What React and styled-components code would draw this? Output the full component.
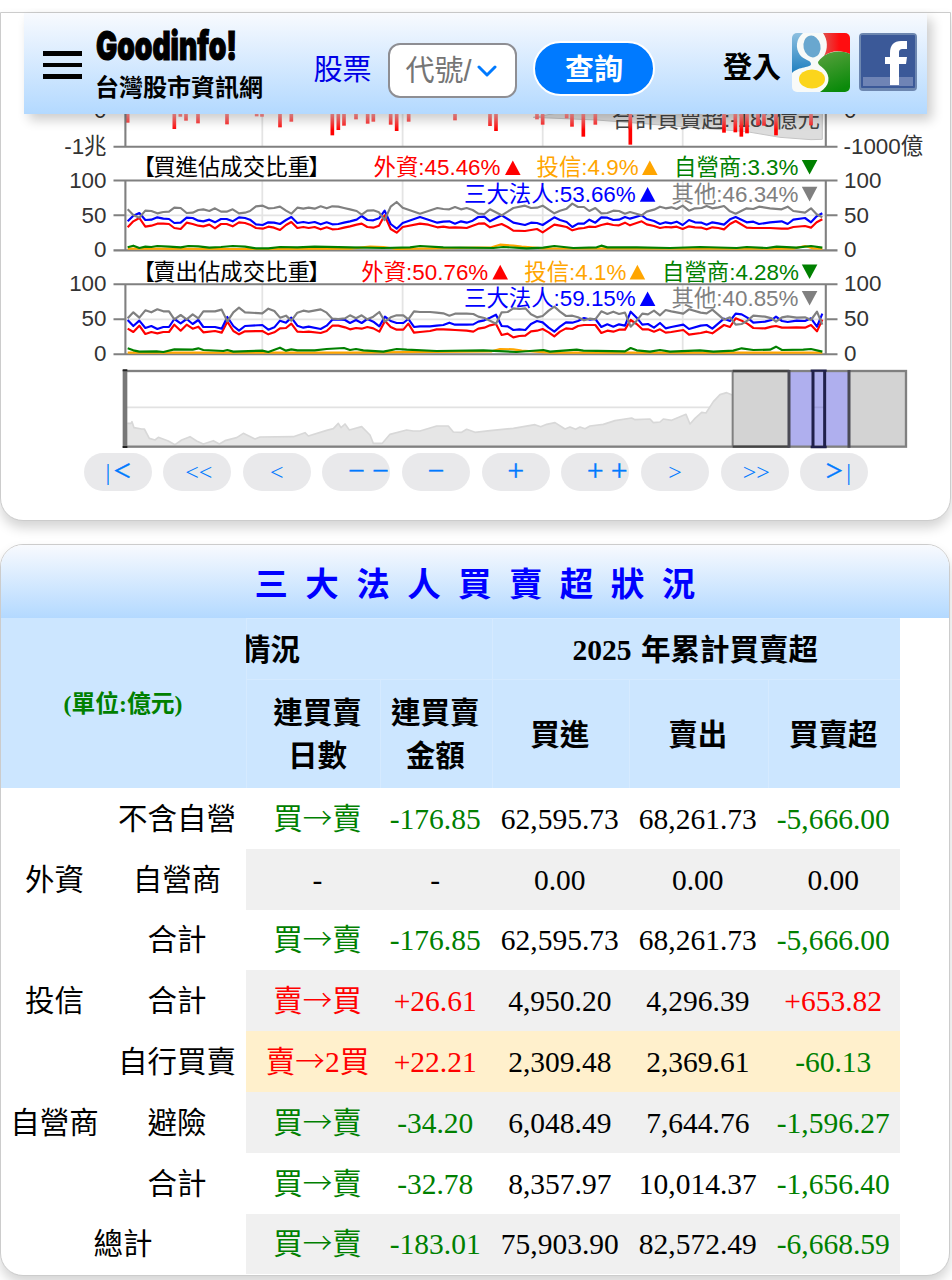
import React from "react";
import styled, { createGlobalStyle } from "styled-components";

const GlobalStyle = createGlobalStyle`
  * {
    box-sizing: border-box;
  }
  body {
    margin: 0;
    background: #fff;
    overflow: hidden;
    font-family: "Liberation Serif", "Noto Sans CJK TC", serif;
    font-size: 29.5px;
    color: #000;
  }
`;

const Page = styled.div`
  width: 952px;
  height: 1280px;
  padding-top: 12px;
  overflow: hidden;
`;

const Card = styled.section`
  position: relative;
  width: ${(p) => p.$width}px;
  height: ${(p) => p.$height}px;
  margin-bottom: 23px;
  border: 1px solid #ccc;
  border-radius: ${(p) => (p.$flatTop ? "0 0 23px 23px" : "23px")};
  background: #fff;
  box-shadow: 0 7px 12px rgba(0, 0, 0, 0.17);
`;

const Header = styled.header`
  position: absolute;
  top: 0;
  left: 23px;
  width: 903px;
  height: 101px;
  display: flex;
  align-items: center;
  padding: 0 10px 0 19px;
  background: linear-gradient(#f8fafe, #b3d9ff);
  box-shadow: 5px 6px 11px rgba(0, 0, 0, 0.2);
`;

const Burger = styled.div`
  display: flex;
  flex-direction: column;
  gap: 7px;
  width: 39px;
  margin-top: 3px;
  & > span {
    height: 4.4px;
    background: #000;
  }
`;

const Brand = styled.div`
  width: 170px;
  margin-left: 13px;
  font: 700 24px/29px "Noto Sans CJK TC", sans-serif;
  white-space: nowrap;
  & > svg {
    display: block;
    margin-bottom: 5px;
    overflow: visible;
  }
`;

const StockLink = styled.a`
  margin: 12px 0 0 48.5px;
  font-size: 29px;
  line-height: 44px;
  color: #0000e6;
`;

const Search = styled.div`
  display: flex;
  align-items: center;
  justify-content: space-between;
  width: 129px;
  height: 55px;
  margin: 14px 0 0 16.5px;
  padding: 0 18px 0 15.5px;
  border: 2px solid #8e8e93;
  border-radius: 12px;
  background: #fff;
  color: #757575;
  font: 29px/40px "Liberation Sans", "Noto Sans CJK TC", sans-serif;
  white-space: nowrap;
`;

const SearchButton = styled.button`
  width: 122px;
  height: 55px;
  margin: 9px 0 0 16px;
  padding: 0 0 3px;
  border: 2px solid #fff;
  border-radius: 28px;
  background: #007aff;
  color: #fff;
  font: 700 29px/44px "Noto Sans CJK TC", sans-serif;
`;

const Login = styled.div`
  display: flex;
  align-items: center;
  gap: 9px;
  margin-left: auto;
  font: 700 29px/44px "Noto Sans CJK TC", sans-serif;
  & > b {
    margin: 2px 2px 0 0;
    font-weight: 700;
  }
  & > svg {
    margin-top: -3px;
  }
`;

const ChartSvg = styled.svg`
  display: block;
  text {
    font-family: "Liberation Sans", "Noto Sans CJK TC", sans-serif;
    font-size: 22.4px;
  }
`;

const Buttons = styled.div`
  display: flex;
  gap: 11.65px;
  margin: 4px 0 0 82.5px;
`;

const PillButton = styled.button`
  display: flex;
  align-items: center;
  justify-content: safe center;
  width: 68px;
  height: 38px;
  padding: 0 22px;
  border: 0;
  border-radius: 19px;
  overflow: hidden;
  background: #e9e9eb;
  color: #007aff;
  font: 24px/36px "Liberation Serif", "Noto Sans CJK TC", serif;
  white-space: nowrap;
`;

const Wide = styled.span`
  padding-left: 2.5px;
  font-size: 19px;
  font-weight: 500;
  letter-spacing: 5px;
  margin-right: -2.5px;
  -webkit-text-stroke: 0.4px #007aff;
`;

const Title = styled.h2`
  height: 73px;
  margin: 0;
  border-radius: 22px 22px 0 0;
  background: linear-gradient(#f8fafe, #b3d9ff);
  color: #0000ff;
  font: 700 33.5px/74px "Noto Sans CJK TC", sans-serif;
  letter-spacing: 17.4px;
  text-align: center;
  text-indent: 17px;
`;

const Grid = styled.div`
  display: grid;
  width: 899px;
  grid-template-columns: 108px 137px 134px 111.5px 137.5px 138.5px 132.5px;
  grid-template-rows: 61px 109px repeat(8, 60.8px);
  border-bottom-left-radius: 22px;
  overflow: hidden;
`;

const Cell = styled.div`
  display: flex;
  align-items: center;
  justify-content: center;
  grid-column: ${(p) => p.$col};
  grid-row: ${(p) => p.$row};
  padding: 2px 1px 0 ${(p) => (p.$col === 3 ? 10 : 0)}px;
  background: ${(p) => p.$bg || "transparent"};
  color: ${(p) => p.$color || "#000"};
  line-height: 43px;
  text-align: center;
  white-space: nowrap;
`;

const HeadCell = styled(Cell)`
  padding-top: 3px;
  background: #cce6ff;
  font-weight: 700;
  word-spacing: 2px;
  box-shadow: ${(p) => (p.$plain ? "none" : "inset 1px 1px 0 #d5eaff")};
`;

const ClippedHead = styled(HeadCell)`
  justify-content: flex-start;
  overflow: hidden;
  text-indent: -5px;
`;

const UnitCell = styled(HeadCell)`
  padding-top: 2px;
  color: #008000;
  font-size: 23.8px;
`;

const Arrow = styled.span`
  font-family: "Noto Sans CJK TC", sans-serif;
  font-weight: 300;
  line-height: 1;
`;

// [x, other %, gap down to the foreign line], three units to a pixel
const buyData = [
  [233, 328, 18], [250, 345, 17], [268, 353, 15], [286, 332, 20], [304, 333, 18], [322, 340, 19], [340, 336], [357, 335],
  [373, 323], [392, 324, 19], [410, 339], [428, 338, 18], [445, 330], [460, 328], [478, 333], [495, 325, 18], [513, 335],
  [530, 335], [548, 328], [567, 340], [585, 338], [600, 333], [618, 319, 11], [638, 317, 11], [655, 325, 13], [672, 324],
  [690, 320, 18], [708, 332], [724, 341], [742, 323], [760, 326], [776, 323], [794, 326], [812, 319], [830, 325],
  [847, 319], [865, 320], [882, 324], [900, 328], [920, 333], [935, 344, 23], [952, 332, 21], [970, 331, 22],
  [987, 337, 22], [1004, 360, 14], [1022, 320], [1040, 306, 12], [1058, 323, 12], [1110, 341, 20], [1135, 333],
  [1162, 324, 14], [1180, 327], [1198, 328, 19], [1215, 321, 11], [1233, 328, 19], [1250, 324, 16], [1268, 330],
  [1285, 341, 20], [1303, 342, 20], [1320, 328, 18], [1355, 346, 26], [1373, 335, 24], [1390, 324, 24], [1425, 317, 18],
  [1443, 324, 22], [1461, 323, 18], [1478, 317, 22], [1513, 340, 22], [1530, 332, 17], [1550, 326], [1567, 311, 10],
  [1584, 321], [1602, 321, 13], [1618, 333, 21], [1636, 324, 13], [1654, 340, 23], [1672, 339, 18], [1690, 332],
  [1707, 333, 17], [1725, 341, 17], [1740, 336, 20], [1775, 346, 18], [1790, 335, 16], [1812, 329], [1830, 320, 12],
  [1847, 325, 14], [1864, 322, 12], [1880, 327], [1898, 317, 12], [1917, 332, 19], [1935, 325], [1955, 324], [1970, 318, 14],
  [1987, 325], [2005, 322, 14], [2022, 318, 14], [2040, 334, 14], [2057, 341, 12], [2090, 325, 16], [2110, 327, 19],
  [2127, 320, 12], [2160, 325, 17], [2195, 328, 22], [2213, 320, 14], [2230, 333, 22], [2265, 338, 24], [2283, 325, 16],
  [2300, 343, 18], [2317, 352, 18],
];

const sellData = [
  [233, 655, 26], [250, 637, 18], [268, 653], [286, 631, 18], [304, 637, 18], [322, 628, 13], [340, 634], [357, 634],
  [373, 658, 17], [392, 645, 22], [410, 658, 17], [428, 643, 14], [445, 655, 20], [460, 634, 16], [495, 634, 12],
  [515, 629, 12], [532, 664, 14], [550, 637, 15], [567, 623, 11], [585, 637, 16], [637, 640, 18], [655, 626, 14],
  [673, 633], [690, 653, 23], [708, 647, 16], [724, 662, 18], [742, 638, 18], [760, 632, 13], [776, 635], [812, 628, 12],
  [830, 638, 16], [847, 656, 18], [865, 657, 19], [885, 655, 22], [900, 646, 19], [918, 655, 24], [935, 646, 17],
  [952, 658, 24], [970, 650, 20], [988, 636, 16], [1005, 665, 13], [1022, 652, 18], [1040, 646, 20], [1060, 646, 20],
  [1075, 658, 14], [1092, 634, 17], [1110, 636, 17], [1140, 636, 14], [1160, 638, 11], [1180, 640, 13], [1198, 647, 21],
  [1215, 641, 16], [1250, 641, 18], [1270, 642, 22], [1285, 650, 21], [1303, 654, 22], [1320, 662, 23], [1338, 671, 28],
  [1355, 637, 27], [1373, 636, 22], [1390, 625, 22], [1408, 627, 20], [1426, 625, 17], [1443, 643, 22], [1461, 652, 29],
  [1478, 648, 20], [1496, 632, 14], [1513, 620, 14], [1530, 635, 15], [1548, 648, 18], [1567, 647, 19], [1584, 652, 15],
  [1602, 661, 21], [1620, 656, 16], [1636, 658, 18], [1654, 634, 18], [1672, 642, 19], [1690, 635], [1707, 642, 16],
  [1725, 638, 12], [1742, 680, 25], [1760, 662, 19], [1777, 641, 14], [1794, 643, 16], [1812, 632, 12], [1830, 646, 19],
  [1847, 630, 13], [1864, 634], [1900, 641, 16], [1917, 628, 17], [1952, 638, 22], [1970, 640, 20], [1987, 629, 14],
  [2022, 659, 19], [2040, 652, 18], [2057, 674, 14], [2075, 672, 19], [2092, 662, 18], [2110, 647, 16], [2145, 650, 20],
  [2165, 655, 20], [2178, 665, 28], [2196, 652, 20], [2213, 649, 17], [2240, 653, 20], [2265, 652, 20], [2283, 660, 20],
  [2301, 635, 14], [2317, 674, 18],
];

const buyDealer = "233,442 250,437 268,444 286,440 304,441 322,438 357,440 392,442 415,438 445,439 478,443 513,441 548,438 585,440 618,445 655,445 690,441 742,442 794,440 900,442 1000,444 1080,442 1110,438 1180,442 1330,444 1360,441 1430,445 1480,443 1513,438 1570,444 1640,442 1654,437 1672,442 1760,442 1860,444 1950,441 2060,444 2090,441 2150,444 2180,440 2240,443 2283,438 2317,443";
const sellDealer = "233,745 250,751 268,755 320,754 340,756 373,748 428,749 445,745 460,750 520,753 532,750 550,755 637,752 655,756 690,743 708,752 724,748 742,751 794,751 830,747 882,744 900,750 918,747 940,751 1000,755 1040,747 1070,749 1160,753 1300,751 1400,756 1480,750 1500,755 1580,749 1600,752 1725,754 1742,744 1760,751 1800,755 1830,750 1860,755 1950,751 1990,755 2050,752 2075,745 2110,750 2160,749 2178,740 2196,750 2260,749 2283,747 2317,755";
const buyTrust = "233,446 600,447 900,446 960,440 1000,441 1040,447 1325,442 1350,434 1390,437 1415,440 1480,445 2230,446 2265,438 2290,445 2317,446";
const sellTrust = "233,758 900,758 1325,754 1350,747 1390,748 1415,752 1500,758 2317,758";

const flowBars = [
  [233, 68], [373, 87], [391, 50], [408, 62], [444, 70], [531, 73], [620, 49], [636, 50], [690, 82], [724, 65],
  [847, 106], [865, 90], [882, 77], [918, 58], [953, 71], [970, 65], [1022, 74], [1040, 93], [1076, 65], [1215, 61],
  [1320, 78], [1338, 93], [1461, 58], [1478, 74], [1550, 55], [1566, 80], [1600, 110], [1636, 74], [1741, 134],
  [2022, 98], [2056, 97], [2074, 110], [2091, 100], [2124, 76], [2142, 77], [2178, 106], [2283, 76],
];

const navArea = "202,190 213,190 216,185 222,203 245,207 253,207 268,235 285,240 295,232 325,243 345,254 365,240 390,230 410,243 430,252 460,242 478,252 495,242 530,233 550,220 585,237 600,231 700,230 735,218 745,228 800,211 820,206 835,190 843,203 855,192 868,210 905,200 930,225 940,250 967,250 990,223 1040,210 1060,213 1080,213 1130,198 1165,198 1180,216 1205,217 1220,208 1245,217 1290,212 1360,205 1425,194 1442,200 1460,193 1485,188 1515,207 1530,201 1547,208 1560,201 1575,206 1590,198 1630,193 1665,182 1715,174 1725,179 1770,177 1780,188 1800,186 1810,177 1835,181 1878,163 1890,192 1905,175 1925,157 1938,159 1960,125 1980,104 2000,98 2017,105";

const otherLine = (data) => data.map(([x, y]) => `${x},${y}`).join(" ");
const totalLine = (data, sum) => data.map(([x, y]) => `${x},${sum - y}`).join(" ");
const foreignLine = (data, sum) => data.map(([x, y, gap = 15]) => `${x},${sum - y + gap}`).join(" ");

const Line = ({ points, color, width = 6.5 }) => (
  <polyline points={points} fill="none" stroke={color} strokeWidth={width} strokeLinejoin="round" />
);

const Up = ({ x, y, color }) => <path d={`M${x} ${y}l7.8-14.6 7.8 14.6z`} fill={color} />;
const Down = ({ x, y, color }) => <path d={`M${x} ${y - 14.6}h15.6l-7.8 14.6z`} fill={color} />;

const ChartTitle = ({ y, children }) => (
  <text x="132.5" y={y}>
    【<tspan dx="-1.7">{children}</tspan><tspan dx="-1.6">】</tspan>
  </text>
);

const yLabels = [
  [187.6, "100"], [222.6, "50"], [257.4, "0"], [291.4, "100"], [326.4, "50"], [361.2, "0"],
];

function Chart() {
  return (
    <ChartSvg width="949" height="436" viewBox="1 13 949 436">
      <defs>
        <linearGradient id="barFade" gradientUnits="userSpaceOnUse" x1="0" y1="40" x2="0" y2="90">
          <stop offset="0" stopColor="#f99" />
          <stop offset="1" stopColor="#f00" />
        </linearGradient>
      </defs>
      {/* axes and grid */}
      <path d="M262.3 100V146M402.6 100V146M542.7 100V146M682.7 100V146M262.3 181V250M402.6 181V250M542.7 181V250M682.7 181V250M262.3 284V354M402.6 284V354M542.7 284V354M682.7 284V354M126 215.3H825M126 319.3H825" stroke="#e4e4e4" strokeWidth="1.8" />
      <g transform="translate(50 100) scale(.33333)">
        <path d="M1450 52L1640 60L2090 95L2190 112L2283 119L2317 118V0H1740Z" fill="#ddd" stroke="#c4c4c4" strokeWidth="3" />
      </g>
      <text x="612" y="126.8" fill="#444">合計買賣超:-183億元</text>
      <g transform="translate(50 100) scale(.33333)">
        {flowBars.map(([x, y]) => (
          <rect key={x} x={x - 5.5} y="20" width="11" height={y - 20} fill="url(#barFade)" />
        ))}
      </g>
      <path d="M113.5 146.7H837.5M113.5 180.5H837.5M113.5 250.4H837.5M113.5 284.3H837.5M113.5 354.3H837.5M113.5 215.3H126M825 215.3H837.5M113.5 319.3H126M825 319.3H837.5M125.4 100V146.7M825.8 100V146.7M125.4 180.5V250.4M825.8 180.5V250.4M125.4 284.3V354.3M825.8 284.3V354.3" fill="none" stroke="#808080" strokeWidth="2.1" />

      <g fill="#333">
        <text x="106.5" y="118" textAnchor="end">0</text>
        <text x="844" y="118">0</text>
        <text x="106.5" y="154.2" textAnchor="end">-1兆</text>
        <text x="843.5" y="154.2">-1000億</text>
        {yLabels.map(([y, t]) => (
          <g key={y}>
            <text x="106.5" y={y} textAnchor="end">{t}</text>
            <text x="844" y={y}>{t}</text>
          </g>
        ))}
      </g>

      <g transform="translate(50 100) scale(.33333)">
        <Line points={buyTrust} color="#ffa500" />
        <Line points={buyDealer} color="#008000" />
        <Line points={foreignLine(buyData, 692)} color="#f00" />
        <Line points={totalLine(buyData, 692)} color="#00f" />
        <Line points={otherLine(buyData)} color="#808080" />
        <Line points={sellTrust} color="#ffa500" />
        <Line points={sellDealer} color="#008000" />
        <Line points={foreignLine(sellData, 1315)} color="#f00" />
        <Line points={totalLine(sellData, 1315)} color="#00f" />
        <Line points={otherLine(sellData)} color="#808080" />
      </g>

      {/* legends */}
      <ChartTitle y={175}>買進佔成交比重</ChartTitle>
      <text x="373.5" y="175" fill="#f00">外資:45.46%</text>
      <Up x={505} y={175} color="#f00" />
      <text x="536.5" y="175" fill="#ffa500">投信:4.9%</text>
      <Up x={642} y={175} color="#ffa500" />
      <text x="674" y="175" fill="#008000">自營商:3.3%</text>
      <Down x={801.8} y={174.6} color="#008000" />
      <text x="464" y="201.5" fill="#00f">三大法人:53.66%</text>
      <Up x={639.8} y={201.7} color="#00f" />
      <text x="671.5" y="201.5" fill="#808080">其他:46.34%</text>
      <Down x={801.8} y={201.4} color="#808080" />

      <ChartTitle y={279.5}>賣出佔成交比重</ChartTitle>
      <text x="361.3" y="279.5" fill="#f00">外資:50.76%</text>
      <Up x={492.4} y={279.4} color="#f00" />
      <text x="524.3" y="279.5" fill="#ffa500">投信:4.1%</text>
      <Up x={629.6} y={279.4} color="#ffa500" />
      <text x="662" y="279.5" fill="#008000">自營商:4.28%</text>
      <Down x={801.8} y={279} color="#008000" />
      <text x="464" y="305.8" fill="#00f">三大法人:59.15%</text>
      <Up x={639.8} y={306} color="#00f" />
      <text x="671.5" y="305.8" fill="#808080">其他:40.85%</text>
      <Down x={801.8} y={305.6} color="#808080" />

      {/* range navigator */}
      <g transform="translate(60 360) scale(.33333)">
        <path d="M200 142H2020" stroke="#e2e2e2" strokeWidth="5" />
        <polygon points={`200,258 ${navArea} 2017,258`} fill="#e6e6e6" />
        <Line points={navArea} color="#d8d8d8" width={5} />
        <rect x="2018" y="33" width="520" height="227" fill="#d3d3d3" />
        <rect x="2188" y="33" width="180" height="227" fill="#afafee" />
        <path d="M2262 142H2294" stroke="#a0a0dd" strokeWidth="5" />
        <rect x="195" y="33" width="2343" height="227" fill="none" stroke="#808080" strokeWidth="7" />
        <path d="M2018 33V260" stroke="#808080" strokeWidth="6" />
        <path d="M2018 33H2188M2018 260H2188" stroke="#444" strokeWidth="7" />
        <path d="M195 30V263" stroke="#777" strokeWidth="14" />
        <path d="M188 31h14M188 261h14" stroke="#222" strokeWidth="6" />
        <path d="M2187 30V263M2367 30V263" stroke="#4a4a55" strokeWidth="9" />
        <path d="M2259 30V263M2294 30V263" stroke="#20204a" strokeWidth="9" />
        <path d="M2252 32h48M2252 261h48" stroke="#20204a" strokeWidth="7" />
      </g>
    </ChartSvg>
  );
}

function GoogleIcon() {
  return (
    <svg width="58" height="59" viewBox="0 0 58 59">
      <defs>
        <clipPath id="tile"><rect width="58" height="59" rx="5" /></clipPath>
        <linearGradient id="gBlue" x1="0" y1="0" x2="0" y2="1">
          <stop offset="0" stopColor="#8dbfe0" />
          <stop offset="1" stopColor="#1f7fc0" />
        </linearGradient>
        <linearGradient id="gRed" x1="0" y1="0" x2="1" y2="0">
          <stop offset="0" stopColor="#e0504c" />
          <stop offset=".6" stopColor="#ff0d10" />
        </linearGradient>
        <linearGradient id="gGreen" x1=".2" y1="0" x2=".5" y2="1">
          <stop offset="0" stopColor="#56a03c" />
          <stop offset="1" stopColor="#0a8a0a" />
        </linearGradient>
      </defs>
      <g clipPath="url(#tile)">
        <rect width="58" height="59" fill="#f8faf8" />
        <path d="M0 0h11C4 6 3 15 8 22c4 5 11 5 11 9 0 4-12 2-19 9z" fill="url(#gBlue)" />
        <path d="M31 0h27v21c-9-4-19-4-26 2 4-7 4-16-1-23z" fill="url(#gRed)" />
        <path d="M26 29c7-10 20-13 32-8v38H28c10-6 11-16 4-23-3-3-6-4-6-7z" fill="url(#gGreen)" />
        <ellipse cx="20" cy="13.500" rx="8.500" ry="11" fill="#69a7cf" transform="rotate(-12 20 13.5)" />
        <ellipse cx="20" cy="46" rx="13" ry="9.500" fill="#fbd51c" />
      </g>
    </svg>
  );
}

function FacebookIcon() {
  return (
    <svg width="58" height="59" viewBox="0 0 58 59">
      <rect width="58" height="58" rx="4" fill="#6d87b0" />
      <rect x="2" y="2" width="54" height="53" rx="1" fill="#3b5998" />
      <rect x="4" y="44" width="50" height="9" fill="#6f84b5" />
      <path d="M31 52V31h-5v-7h5v-4c0-8 4-12 11-12h6v8h-4c-3 0-4 1-4 4v4h8l-1 7h-7v21z" fill="#fff" />
    </svg>
  );
}

const navButtons = [
  ["first", <>|<Wide>＜</Wide></>],
  ["back2", "<<"],
  ["back", "<"],
  ["out2", <Wide>－－</Wide>],
  ["out", <Wide>－</Wide>],
  ["in", <Wide>＋</Wide>],
  ["in2", <Wide>＋＋</Wide>],
  ["fwd", ">"],
  ["fwd2", ">>"],
  ["last", <><Wide>＞</Wide>|</>],
];

const GREEN = "#008000";
const RED = "#ff0000";

const rows = [
  { name: "不含自營", days: "買→賣", amount: "-176.85", buy: "62,595.73", sell: "68,261.73", net: "-5,666.00" },
  { name: "自營商", days: "-", amount: "-", buy: "0.00", sell: "0.00", net: "0.00" },
  { name: "合計", days: "買→賣", amount: "-176.85", buy: "62,595.73", sell: "68,261.73", net: "-5,666.00" },
  { name: "合計", days: "賣→買", amount: "+26.61", buy: "4,950.20", sell: "4,296.39", net: "+653.82" },
  { name: "自行買賣", days: "賣→2買", amount: "+22.21", buy: "2,309.48", sell: "2,369.61", net: "-60.13", hover: true },
  { name: "避險", days: "買→賣", amount: "-34.20", buy: "6,048.49", sell: "7,644.76", net: "-1,596.27" },
  { name: "合計", days: "買→賣", amount: "-32.78", buy: "8,357.97", sell: "10,014.37", net: "-1,656.40" },
  { total: true, name: "總計", days: "買→賣", amount: "-183.01", buy: "75,903.90", sell: "82,572.49", net: "-6,668.59" },
];

const signColor = (v) => {
  if (v.length > 1 && v[0] === "-") return GREEN;
  if (v[0] === "+") return RED;
  return "#000";
};

function Days({ value }) {
  const [from, to] = value.split("→");
  if (!to) return value;
  return <span>{from}<Arrow>→</Arrow>{to}</span>;
}

function Row({ data, index }) {
  const row = index + 3;
  const bg = data.hover ? "#fff0cc" : index % 2 ? "#f0f0f0" : "#fff";
  const trend = signColor(data.amount);
  return (
    <>
      <Cell $row={row} $col={data.total ? "1 / 3" : 2}>{data.name}</Cell>
      <Cell $row={row} $col={3} $bg={bg} $color={trend}><Days value={data.days} /></Cell>
      <Cell $row={row} $col={4} $bg={bg} $color={trend}>{data.amount}</Cell>
      <Cell $row={row} $col={5} $bg={bg}>{data.buy}</Cell>
      <Cell $row={row} $col={6} $bg={bg}>{data.sell}</Cell>
      <Cell $row={row} $col={7} $bg={bg} $color={signColor(data.net)}>{data.net}</Cell>
    </>
  );
}

function App() {
  return (
    <Page>
      <GlobalStyle />
      <Card $flatTop $width={951} $height={509}>
        <Chart />
        <Buttons>
          {navButtons.map(([key, label]) => (
            <PillButton key={key}>{label}</PillButton>
          ))}
        </Buttons>
        <Header>
          <Burger>
            <span />
            <span />
            <span />
          </Burger>
          <Brand>
            <svg width="146" height="38" viewBox="0 0 146 38">
              <text x="1" y="32" textLength="141" lengthAdjust="spacingAndGlyphs" fontFamily="Inter, sans-serif" fontWeight="900" fontSize="40" stroke="#000" strokeWidth="1.2">Goodinfo!</text>
            </svg>
            台灣股市資訊網
          </Brand>
          <StockLink>股票</StockLink>
          <Search>
            代號/
            <svg width="20" height="12" viewBox="0 0 20 12">
              <path d="M2 2l8 8 8-8" fill="none" stroke="#007aff" strokeWidth="3" strokeLinecap="round" strokeLinejoin="round" />
            </svg>
          </Search>
          <SearchButton>查詢</SearchButton>
          <Login>
            <b>登入</b>
            <GoogleIcon />
            <FacebookIcon />
          </Login>
        </Header>
      </Card>

      <Card $width={950} $height={732}>
        <Title>三大法人買賣超狀況</Title>
        <Grid>
          <UnitCell $plain $col="1 / 3" $row="1 / 3">(單位:億元)</UnitCell>
          <ClippedHead $col="3 / 5" $row="1">情況</ClippedHead>
          <HeadCell $col="5 / 8" $row="1">2025 年累計買賣超</HeadCell>
          <HeadCell $col={3} $row="2">連買賣<br />日數</HeadCell>
          <HeadCell $col={4} $row="2">連買賣<br />金額</HeadCell>
          <HeadCell $col={5} $row="2">買進</HeadCell>
          <HeadCell $col={6} $row="2">賣出</HeadCell>
          <HeadCell $col={7} $row="2">買賣超</HeadCell>
          <Cell $col="1" $row="3 / 6">外資</Cell>
          <Cell $col="1" $row="6">投信</Cell>
          <Cell $col="1" $row="7 / 10">自營商</Cell>
          {rows.map((r, i) => (
            <Row key={i} data={r} index={i} />
          ))}
        </Grid>
      </Card>
    </Page>
  );
}

export default App;
